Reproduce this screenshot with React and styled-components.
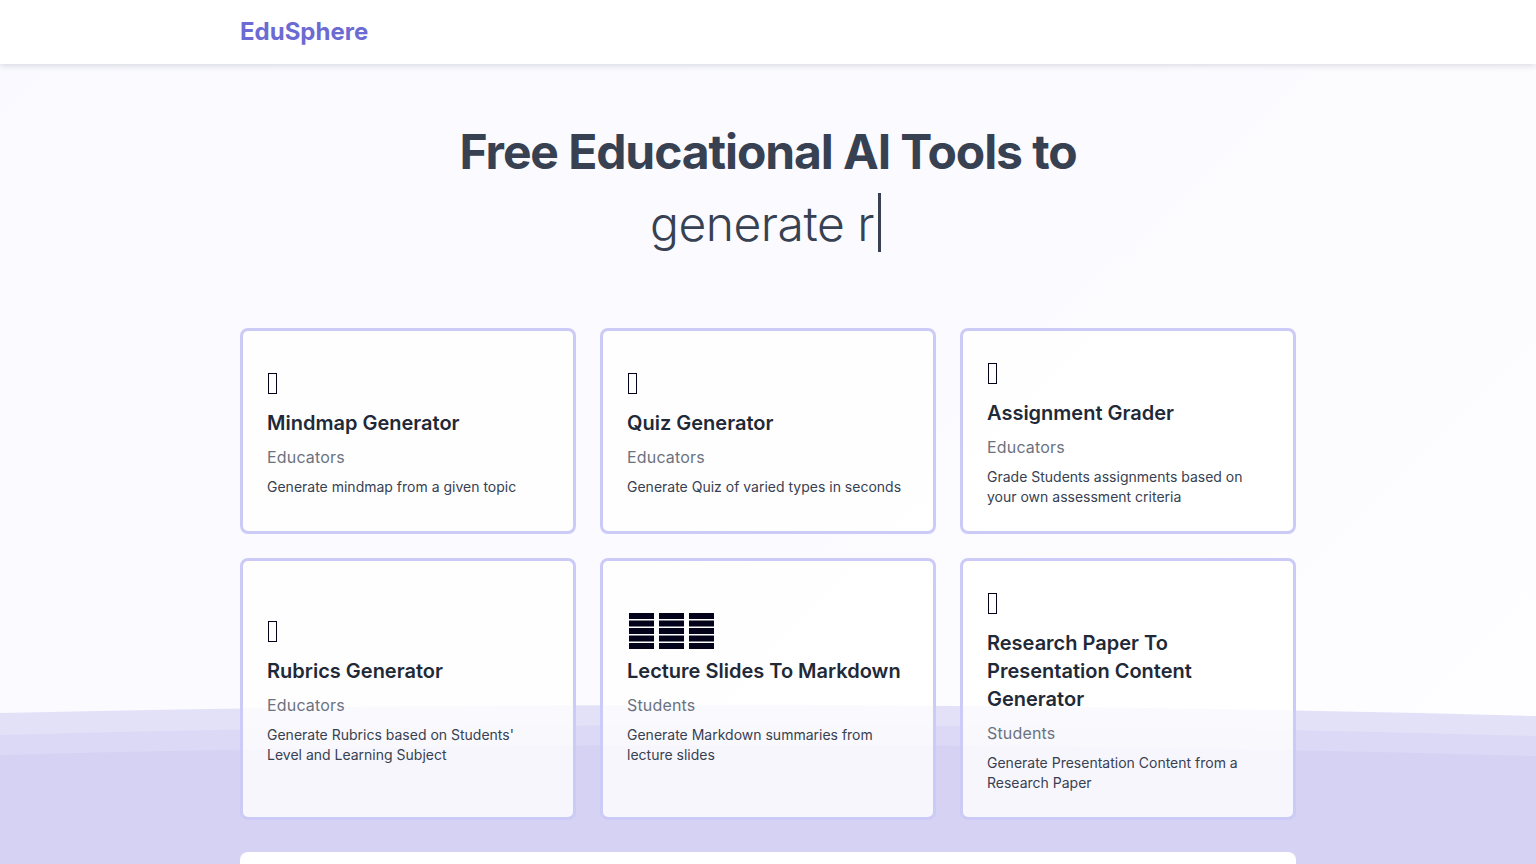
import styled, { createGlobalStyle } from "styled-components";

const GlobalStyle = createGlobalStyle`
    * {
        box-sizing: border-box;
    }
    html, body {
        margin: 0;
        height: 864px;
        overflow: hidden;
    }
    body {
        font-family: Inter, "Liberation Sans", sans-serif;
    }
`;

const Page = styled.div`
    position: relative;
    height: 864px;
    overflow: hidden;
    background: linear-gradient(135deg, #f9f9ff 0%, #fbfbff 50%, #fefeff 100%);
`;

const Waves = styled.svg`
    position: absolute;
    left: 0;
    bottom: 0;
    width: 1536px;
    height: 164px;
`;

const Header = styled.header`
    position: relative;
    height: 64px;
    background: #fff;
    box-shadow: 0 2px 6px rgba(30, 30, 60, 0.14);
`;

const Container = styled.div`
    width: 1056px;
    margin: 0 auto;
`;

const Logo = styled.div`
    font-size: 24px;
    line-height: 64px;
    font-weight: 700;
    color: #6c6bd4;
`;

const Main = styled(Container)`
    position: relative;
`;

const Hero = styled.section`
    padding-top: 52px;
    height: 264px;
    text-align: center;
    color: #374151;
`;

const Title = styled.h1`
    margin: 0;
    font-size: 48px;
    line-height: 72px;
    font-weight: 700;
    letter-spacing: -1.1px;
`;

const Typed = styled.div`
    font-size: 48px;
    line-height: 72px;
    font-weight: 300;
    letter-spacing: -0.5px;
`;

const Caret = styled.span`
    display: inline-block;
    width: 3px;
    height: 59px;
    margin: 0 5px 0 4px;
    vertical-align: -11px;
    background: #374151;
`;

const Grid = styled.div`
    display: grid;
    grid-template-columns: repeat(3, 1fr);
    gap: 24px;
`;

const Card = styled.article`
    display: flex;
    flex-direction: column;
    justify-content: center;
    padding: 24px;
    border: 3px solid #cccaf7;
    border-radius: 8px;
    background: rgba(255, 255, 255, 0.8);
`;

const Icon = styled.div`
    display: flex;
    align-items: center;
    height: 36px;
    margin-bottom: 8px;
`;

// the emoji font never loaded in the original, so the icons are empty glyph boxes
const MissingGlyph = styled.span`
    width: 9px;
    height: 21px;
    margin-left: 1px;
    border: 1.4px solid #02031a;
`;

const CardTitle = styled.h2`
    margin: 0 0 8px;
    font-size: 20px;
    line-height: 28px;
    font-weight: 600;
    color: #1f2937;
`;

const Audience = styled.div`
    margin-bottom: 8px;
    font-size: 16px;
    line-height: 24px;
    letter-spacing: 0.17px;
    color: #6b7280;
`;

const Description = styled.p`
    margin: 0;
    font-size: 14px;
    line-height: 20px;
    color: #374151;
`;

const Panel = styled.div`
    height: 200px;
    margin-top: 32px;
    border-radius: 8px;
    background: #fff;
`;

const SlidesIcon = () => (
    <svg width="88" height="36" viewBox="0 0 88 36">
        {[2, 32, 62].map((x) =>
            [0, 7.5, 15, 22.5, 30].map((y) => (
                <rect key={`${x}-${y}`} x={x} y={y} width="25" height="6" fill="#02031a" />
            ))
        )}
    </svg>
);

const tools = [
    { title: "Mindmap Generator", audience: "Educators", text: "Generate mindmap from a given topic" },
    { title: "Quiz Generator", audience: "Educators", text: "Generate Quiz of varied types in seconds" },
    { title: "Assignment Grader", audience: "Educators", text: "Grade Students assignments based on your own assessment criteria" },
    { title: "Rubrics Generator", audience: "Educators", text: "Generate Rubrics based on Students' Level and Learning Subject" },
    { slides: true, title: "Lecture Slides To Markdown", audience: "Students", text: "Generate Markdown summaries from lecture slides" },
    { title: "Research Paper To Presentation Content Generator", audience: "Students", text: "Generate Presentation Content from a Research Paper" },
];

const App = () => {
    return (
        <Page>
            <GlobalStyle />
            <Waves viewBox="0 0 1536 164">
                <path d="M0 13 Q768 -4.5 1536 16 V164 H0 Z" fill="#e3e1f8" />
                <path d="M0 35 Q768 14.5 1536 36 V164 H0 Z" fill="#dcd9f6" />
                <path d="M0 55 Q768 34.5 1536 56 V164 H0 Z" fill="#d6d2f4" />
            </Waves>
            <Header>
                <Container>
                    <Logo>EduSphere</Logo>
                </Container>
            </Header>
            <Main>
                <Hero>
                    <Title>Free Educational AI Tools to</Title>
                    <Typed>generate r<Caret /></Typed>
                </Hero>
                <Grid>
                    {tools.map((tool) => (
                        <Card key={tool.title}>
                            <Icon>{tool.slides ? <SlidesIcon /> : <MissingGlyph />}</Icon>
                            <CardTitle>{tool.title}</CardTitle>
                            <Audience>{tool.audience}</Audience>
                            <Description>{tool.text}</Description>
                        </Card>
                    ))}
                </Grid>
                <Panel />
            </Main>
        </Page>
    );
};

export default App;
